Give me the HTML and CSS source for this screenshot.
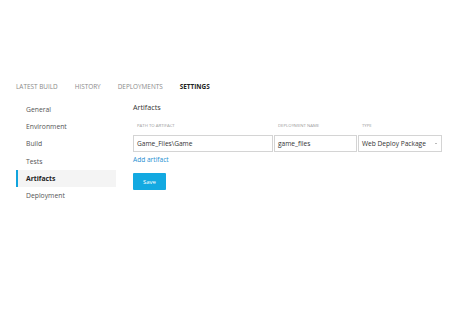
FILE: index.html
```html
<!DOCTYPE html>
<html>
<head>
<meta charset="utf-8">
<link rel="stylesheet" href="styles.css">
</head>
<body>
<div class="page">
  <nav class="tabs">
    <span class="tab">LATEST BUILD</span>
    <span class="tab">HISTORY</span>
    <span class="tab">DEPLOYMENTS</span>
    <span class="tab active">SETTINGS</span>
  </nav>
  <div class="body">
    <ul class="side">
      <li>General</li>
      <li>Environment</li>
      <li>Build</li>
      <li>Tests</li>
      <li class="sel">Artifacts</li>
      <li>Deployment</li>
    </ul>
    <div class="main">
      <h2 class="title">Artifacts</h2>
      <div class="grid">
        <div class="lbl">PATH TO ARTIFACT</div>
        <div class="lbl">DEPLOYMENT NAME</div>
        <div class="lbl">TYPE</div>
        <div class="inp">Game_Files\Game</div>
        <div class="inp">game_files</div>
        <div class="inp sel-box"><span>Web Deploy Package</span><span class="arrow"></span></div>
      </div>
      <div class="add">Add artifact</div>
      <button class="save">Save</button>
    </div>
  </div>
</div>
</body>
</html>
```

FILE: styles.css
```css
* { box-sizing: border-box; }
html, body { margin: 0; padding: 0; background: #fff; }
body { font-family: "Open Sans", "Noto Sans", sans-serif; color: #333; width: 474px; height: 335px; overflow: hidden; }
.page { padding: 82px 0 0 16px; }
.tabs { display: flex; height: 10px; align-items: center; font-size: 6.4px; }
.tab { color: #8a8a8a; margin-right: 17px; line-height: 10px; }
.tab.active { color: #222; font-weight: 700; }
.body { display: flex; margin-top: 9px; }
.side { list-style: none; margin: 0; padding: 0; width: 100px; }
.side li { height: 17.2px; line-height: 17.2px; padding-left: 10px; font-size: 6.8px; color: #555; }
.side li.sel { background: #f4f4f4; color: #222; font-weight: 700; border-left: 2px solid #11a4dd; padding-left: 8px; }
.main { margin-left: 17px; width: 312px; }
.title { margin: 0; font-weight: 400; font-size: 7.2px; color: #333; line-height: 10px; padding-top: 1px; }
.grid { display: grid; grid-template-columns: 140px 83px 84px; column-gap: 1px; margin-top: 10px; }
.lbl { font-size: 4.3px; color: #9a9a9a; line-height: 6px; padding-left: 4px; margin-bottom: 7px; }
.inp { height: 17px; border: 1px solid #d4d4d4; font-size: 6.6px; line-height: 15px; padding-left: 3px; color: #333; background: #fff; }
.sel-box { display: flex; justify-content: space-between; align-items: center; padding-right: 4px; }
.arrow { width: 0; height: 0; border-left: 1.2px solid transparent; border-right: 1.2px solid transparent; border-top: 1.5px solid #777; }
.add { font-size: 6.6px; color: #1b8fd2; margin-top: 3px; line-height: 10px; }
.save { display: block; margin-top: 8px; width: 33px; height: 17px; border: none; background: #13a9e1; color: #fff; font-family: inherit; font-size: 6px; padding: 0; border-radius: 1px; }
```
